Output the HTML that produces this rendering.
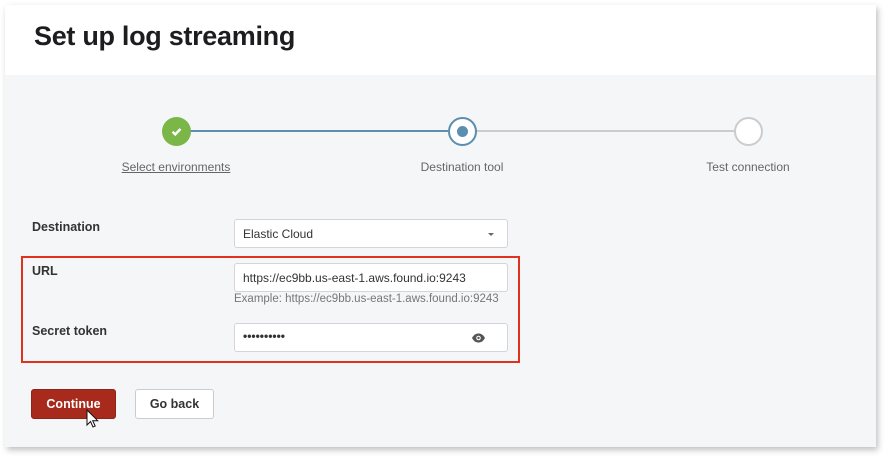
<!DOCTYPE html>
<html><head><meta charset="utf-8"><style>
*{box-sizing:border-box;margin:0;padding:0}
body{width:891px;height:462px;background:#fff;font-family:"Liberation Sans","DejaVu Sans",sans-serif;position:relative;overflow:hidden}
.card{position:absolute;left:5px;top:5px;width:871px;height:442px;background:#f5f6f8;box-shadow:2px 3px 6px rgba(0,0,0,.25)}
.hdr{position:absolute;left:0;top:0;width:871px;height:70px;background:#fff}
.hdr h1{position:absolute;left:29px;top:16px;font-size:27px;font-weight:600;color:#1d1d1f;letter-spacing:-0.3px}
.abs{position:absolute}
.lbl{font-size:12.5px;font-weight:bold;color:#333}
.step{font-size:12px;color:#666;text-align:center;width:200px}
.inp{position:absolute;left:229px;width:274px;height:29px;background:#fff;border:1px solid #d3d5d9;border-radius:3px;font-size:12px;color:#333;padding:7px 0 0 8px}
.btn{position:absolute;top:384px;height:30px;border-radius:3px;font-size:12.5px;font-weight:bold;text-align:center;line-height:28px}
</style></head><body>
<div class="card">
<div class="hdr"><h1>Set up log streaming</h1></div>
<div class="abs" style="left:185px;top:125px;width:258px;height:2px;background:#5b8fb0"></div>
<div class="abs" style="left:471px;top:125px;width:258px;height:2px;background:#ccc"></div>
<div class="abs" style="left:157px;top:112px;width:29px;height:29px;border-radius:50%;background:#7ab648"></div>
<svg class="abs" style="left:164px;top:119px" width="15" height="15" viewBox="0 0 15 15"><path d="M3.5 7.8l2.7 2.6 5.3-5.4" fill="none" stroke="#fff" stroke-width="2.4"/></svg>
<div class="abs" style="left:443px;top:112px;width:29px;height:29px;border-radius:50%;background:#fff;border:2px solid #5b8fb0"></div>
<div class="abs" style="left:452px;top:121px;width:11px;height:11px;border-radius:50%;background:#5b8fb0"></div>
<div class="abs" style="left:729px;top:112px;width:29px;height:29px;border-radius:50%;background:#fff;border:2px solid #ccc"></div>
<div class="abs step" style="left:71px;top:155px;text-decoration:underline">Select environments</div>
<div class="abs step" style="left:357px;top:155px">Destination tool</div>
<div class="abs step" style="left:643px;top:155px">Test connection</div>

<div class="abs lbl" style="left:27px;top:215px">Destination</div>
<div class="inp" style="top:214px">Elastic Cloud</div>
<div class="abs" style="left:483px;top:228px;border-left:3px solid transparent;border-right:3px solid transparent;border-top:3px solid #666"></div>

<div class="abs" style="left:16px;top:251px;width:499px;height:107px;border:2px solid #e0321e"></div>
<div class="abs lbl" style="left:27px;top:259px">URL</div>
<div class="inp" style="top:258px">https://ec9bb.us-east-1.aws.found.io:9243</div>
<div class="abs" style="left:229px;top:288px;font-size:11.5px;color:#777">Example: https://ec9bb.us-east-1.aws.found.io:9243</div>
<div class="abs lbl" style="left:27px;top:319px">Secret token</div>
<div class="inp" style="top:318px;font-weight:bold;letter-spacing:0px;padding-top:5px">••••••••••</div>
<svg class="abs" style="left:466px;top:328px" width="15" height="10" viewBox="0 0 15 10"><path d="M1 5C3 1.5 5 .5 7.5 .5S12 1.5 14 5C12 8.5 10 9.5 7.5 9.5S3 8.5 1 5Z" fill="#555"/><circle cx="7.5" cy="5" r="2.3" fill="#fff"/><circle cx="7.5" cy="5" r="1.2" fill="#555"/></svg>

<div class="btn" style="left:26px;width:85px;background:#a72a1d;color:#fff;border:1px solid #8e2418">Continue</div>
<div class="btn" style="left:130px;width:79px;background:#fff;color:#333;border:1px solid #ccc">Go back</div>
<svg class="abs" style="left:81px;top:404px" width="14" height="20" viewBox="0 0 14 20"><path d="M1 1v15l3.5-3.5 2.5 5.5 2.2-1-2.5-5.3h5z" fill="#fff" stroke="#111" stroke-width="1"/></svg>
</div>
</body></html>
